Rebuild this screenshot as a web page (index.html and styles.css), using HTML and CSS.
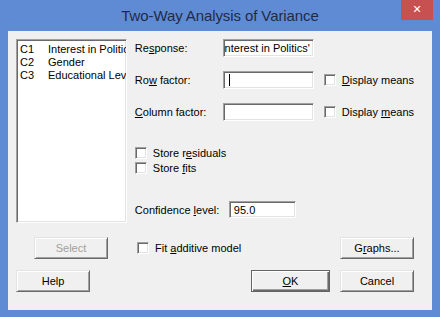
FILE: index.html
```html
<!DOCTYPE html>
<html>
<head>
<meta charset="utf-8">
<link rel="stylesheet" href="styles.css">
</head>
<body>
<div class="window">
  <div class="titlebar">
    <span class="spacer"></span>
    <span class="title">Two-Way Analysis of Variance</span>
    <span class="close">&#x2715;</span>
  </div>
  <div class="client">
    <div class="top">
      <div class="listbox sunken">
        <div class="item"><span class="colnum">C1</span><span class="colname">Interest in Politics</span></div>
        <div class="item"><span class="colnum">C2</span><span class="colname">Gender</span></div>
        <div class="item"><span class="colnum">C3</span><span class="colname">Educational Level</span></div>
      </div>
      <div class="panel">
        <div class="field">
          <span class="label">Re<u>s</u>ponse:</span>
          <div class="edit sunken scrolled"><span>'Interest in Politics'</span></div>
        </div>
        <div class="field gap14">
          <span class="label">Ro<u>w</u> factor:</span>
          <div class="edit sunken"><span class="caret"></span></div>
          <span class="check sunken cb-after"></span>
          <span class="cbtext"><u>D</u>isplay means</span>
        </div>
        <div class="field gap14">
          <span class="label"><u>C</u>olumn factor:</span>
          <div class="edit sunken"></div>
          <span class="check sunken cb-after"></span>
          <span class="cbtext">Display <u>m</u>eans</span>
        </div>
        <div class="cbrow gap26">
          <span class="check sunken"></span>
          <span class="cbtext">Store r<u>e</u>siduals</span>
        </div>
        <div class="cbrow gap3">
          <span class="check sunken"></span>
          <span class="cbtext">Store <u>f</u>its</span>
        </div>
        <div class="field conf">
          <span class="label wide">Confidence <u>l</u>evel:</span>
          <div class="edit sunken small"><span>95.0</span></div>
        </div>
      </div>
    </div>
    <div class="btnrow first">
      <span class="button disabled select">Select</span>
      <span class="check sunken fit"></span>
      <span class="cbtext">Fit <u>a</u>dditive model</span>
      <span class="grow"></span>
      <span class="button">G<u>r</u>aphs...</span>
    </div>
    <div class="btnrow second">
      <span class="button">Help</span>
      <span class="grow"></span>
      <span class="button default"><u>O</u>K</span>
      <span class="button cancel">Cancel</span>
    </div>
  </div>
</div>
</body>
</html>
```

FILE: styles.css
```css
* { box-sizing: border-box; }
html, body {
  margin: 0;
  padding: 0;
  background: #5f8bd4;
}
.window {
  width: 440px;
  height: 317px;
  background: #5f8bd4;
  font-family: "Liberation Sans", Arial, sans-serif;
  font-size: 11px;
  color: #000;
}
.titlebar {
  height: 31px;
  display: grid;
  grid-template-columns: 1fr auto 1fr;
}
.title {
  font-family: "Liberation Sans", Arial, sans-serif;
  font-size: 15px;
  line-height: 31px;
  color: #1f2b45;
  letter-spacing: -0.1px;
}
.close {
  justify-self: end;
  align-self: start;
  width: 32px;
  height: 20px;
  margin-right: 7px;
  background: #c75050;
  color: #fff;
  font-family: "DejaVu Sans", sans-serif;
  font-size: 11px;
  font-weight: bold;
  line-height: 20px;
  text-align: center;
}
.client {
  margin: 0 8px;
  height: 279px;
  background: #f0f0f0;
  padding: 8px 18px 0 8px;
}
.sunken {
  border: 1px solid;
  border-color: #a0a0a0 #ffffff #ffffff #a0a0a0;
  box-shadow: inset 1px 1px 0 #696969, inset -1px -1px 0 #e3e3e3;
  background: #fff;
}
.top {
  display: flex;
  height: 184px;
}
.listbox {
  width: 112px;
  height: 184px;
  padding: 3px 0 0 3px;
  overflow: hidden;
}
.item {
  display: flex;
  height: 13px;
  line-height: 13px;
  white-space: nowrap;
}
.colnum { width: 28px; flex: none; }
.colname { flex: none; }
.panel {
  margin-left: 8px;
  display: flex;
  flex-direction: column;
}
.field {
  display: flex;
  align-items: center;
  height: 18px;
}
.gap14 { margin-top: 14px; }
.gap26 { margin-top: 26px; }
.gap3 { margin-top: 3px; }
.label { width: 88px; flex: none; }
.label.wide { width: 94px; }
.edit {
  width: 91px;
  height: 18px;
  display: flex;
  align-items: center;
  overflow: hidden;
  white-space: nowrap;
  padding: 0 3px 0 4px;
}
.edit.scrolled { justify-content: flex-end; }
.edit.small { width: 67px; height: 17px; }
.caret {
  display: block;
  width: 1px;
  height: 12px;
  background: #000;
  margin-left: 1px;
}
.check {
  display: inline-block;
  width: 12px;
  height: 12px;
  flex: none;
}
.cb-after { margin-left: 10px; }
.cbtext { margin-left: 6px; white-space: nowrap; }
.cbrow {
  display: flex;
  align-items: center;
  height: 12px;
}
.conf { margin-top: 27px; height: 17px; }
.btnrow {
  display: flex;
  align-items: center;
  height: 22px;
}
.btnrow.first { margin-top: 14px; }
.btnrow.second { margin-top: 11px; }
.grow { flex: 1; }
.button {
  width: 74px;
  height: 22px;
  display: flex;
  align-items: center;
  justify-content: center;
  background: #f0f0f0;
  border: 1px solid;
  border-color: #e3e3e3 #696969 #696969 #e3e3e3;
  box-shadow: inset 1px 1px 0 #fff, inset -1px -1px 0 #a0a0a0;
}
.button.select { margin-left: 18px; }
.button.disabled { color: #a0a0a0; }
.check.fit { margin-left: 29px; }
.button.default {
  width: 79px;
  border-color: #646464;
  box-shadow: inset 1px 1px 0 #fff, inset -1px -1px 0 #696969, inset -2px -2px 0 #a0a0a0;
}
.button.cancel { margin-left: 10px; }
u { text-decoration: underline; text-underline-offset: 1px; }
```
